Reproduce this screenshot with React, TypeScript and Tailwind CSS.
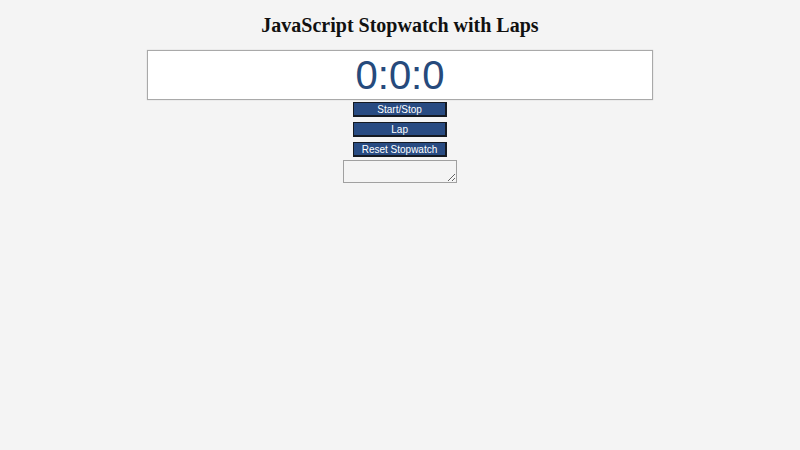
export default function App() {
	return (
		<div className="min-h-[450px] w-full bg-[#f4f4f4] flex flex-col items-center font-['Liberation_Sans',Arial,sans-serif]">
			<h1 className="mt-[13px] mb-[13px] text-[20px] leading-[24px] font-bold text-[#111] font-['Liberation_Serif','Times_New_Roman',serif]">
				JavaScript Stopwatch with Laps
			</h1>
			<div className="w-[506px] h-[50px] bg-white border border-[#a9a9a9] shadow-[0_0_1px_#bbb] flex items-center justify-center">
				<span className="text-[40px] leading-none text-[#264a7c]">0:0:0</span>
			</div>
			<div className="mt-[2px] flex flex-col items-center gap-[5px]">
				<StopButton label="Start/Stop" />
				<StopButton label="Lap" />
				<StopButton label="Reset Stopwatch" />
			</div>
			<textarea
				className="mt-[3px] w-[114px] h-[23px] bg-[#f4f4f4] border border-[#a0a0a0] resize-y"
				readOnly
			/>
		</div>
	);
}

function StopButton({ label }: { label: string }) {
	return (
		<button className="w-[94px] h-[15px] px-0 pt-[2px] flex items-center justify-center whitespace-nowrap bg-[#284b82] text-white text-[11.5px] leading-none border border-[#151a22] border-r-2 border-b-2">
			<span className="inline-block scale-x-[0.87]">{label}</span>
		</button>
	);
}
